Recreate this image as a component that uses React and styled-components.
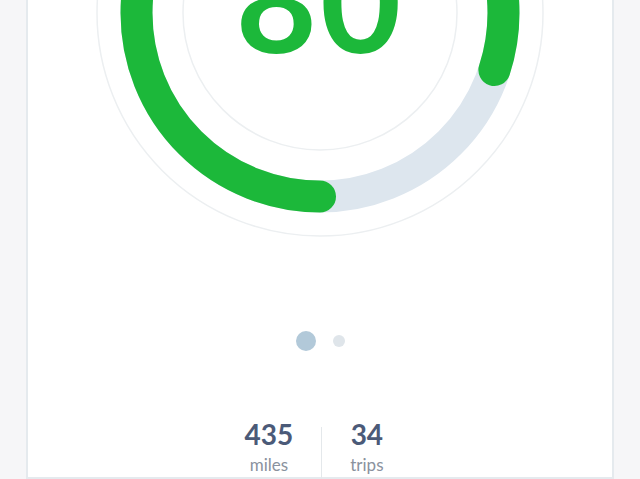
import React from 'react';
import styled, { createGlobalStyle } from 'styled-components';

const GlobalStyle = createGlobalStyle`
  html, body {
    margin: 0;
    padding: 0;
    background: #f6f6f8;
    overflow: hidden;
    font-family: "Lato", "Open Sans", sans-serif;
  }
`;

const SIZE = 450;
const C = SIZE / 2;
const TRACK_R = 183.5;
const CIRC = 2 * Math.PI * TRACK_R;

const Page = styled.div`
  display: flex;
  justify-content: center;
  height: 100vh;
`;

const Card = styled.div`
  width: 584px;
  margin-top: -260px;
  padding-top: 46px;
  background: #ffffff;
  border: 2px solid #e5eaee;
  display: flex;
  flex-direction: column;
  align-items: center;
`;

const Gauge = styled.div`
  position: relative;
  width: ${SIZE}px;
  height: ${SIZE}px;
`;

const Score = styled.div`
  position: absolute;
  left: 0;
  right: 0;
  top: 141px;
  text-align: center;
  font-size: 140px;
  font-weight: 700;
  line-height: 1;
  letter-spacing: 3px;
  color: #1cb83a;
`;

const Dots = styled.div`
  display: flex;
  align-items: center;
  gap: 17px;
  margin-top: 93px;
  height: 20px;
`;

const Dot = styled.span`
  display: block;
  width: ${p => (p.active ? 20 : 12)}px;
  height: ${p => (p.active ? 20 : 12)}px;
  border-radius: 50%;
  background: ${p => (p.active ? '#b2c9d9' : '#dfe5ea')};
`;

const Stats = styled.div`
  display: flex;
  justify-content: center;
  margin-top: 67px;
  padding-right: 12px;
`;

const Stat = styled.div`
  display: flex;
  flex-direction: column;
  align-items: center;
  padding: 0 28px;
`;

const Value = styled.div`
  font-size: 28px;
  font-weight: 700;
  line-height: 1.2;
  color: #4b5a78;
`;

const Label = styled.div`
  font-size: 17px;
  font-weight: 400;
  line-height: 1.2;
  margin-top: 3px;
  color: #8a929e;
`;

const Divider = styled.div`
  width: 1px;
  margin-top: 9px;
  min-height: 80px;
  background: #e4e8eb;
`;

function ScoreRing({ value }) {
  return (
    <svg width={SIZE} height={SIZE} viewBox={`0 0 ${SIZE} ${SIZE}`}>
      <circle cx={C} cy={C} r={223} fill="none" stroke="#eceff1" strokeWidth="1.5" />
      <circle cx={C} cy={C} r={137} fill="none" stroke="#eceff1" strokeWidth="1.5" />
      <circle cx={C} cy={C} r={TRACK_R} fill="none" stroke="#dde6ee" strokeWidth="32" />
      <circle
        cx={C}
        cy={C}
        r={TRACK_R}
        fill="none"
        stroke="#1cb83a"
        strokeWidth="32"
        strokeLinecap="round"
        strokeDasharray={`${(CIRC * value) / 100} ${CIRC}`}
        transform={`rotate(90 ${C} ${C})`}
      />
    </svg>
  );
}

export default function App() {
  const score = 80;
  return (
    <Page>
      <GlobalStyle />
      <Card>
        <Gauge>
          <ScoreRing value={score} />
          <Score>{score}</Score>
        </Gauge>
        <Dots>
          <Dot active />
          <Dot />
        </Dots>
        <Stats>
          <Stat>
            <Value>435</Value>
            <Label>miles</Label>
          </Stat>
          <Divider />
          <Stat>
            <Value>34</Value>
            <Label>trips</Label>
          </Stat>
        </Stats>
      </Card>
    </Page>
  );
}
